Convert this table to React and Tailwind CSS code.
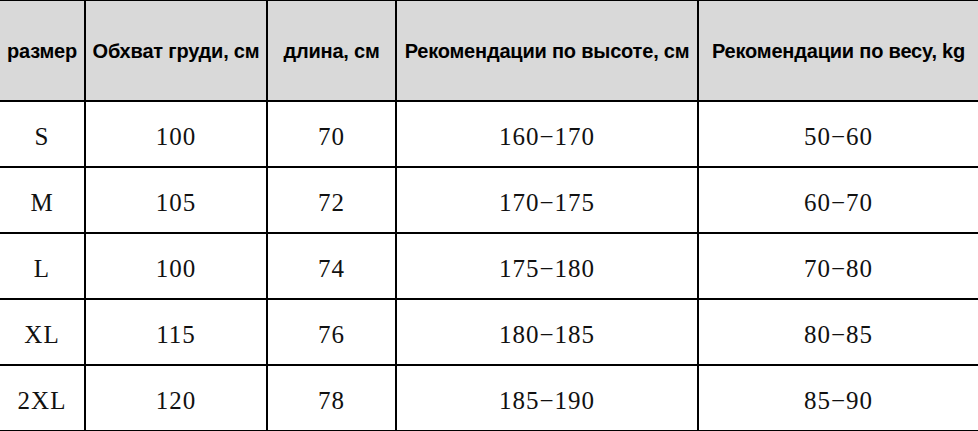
import React from "react";

const headers = [
  "размер",
  "Обхват груди, см",
  "длина, см",
  "Рекомендации по высоте, см",
  "Рекомендации по весу, kg",
];

const rows = [
  ["S", "100", "70", "160−170", "50−60"],
  ["M", "105", "72", "170−175", "60−70"],
  ["L", "100", "74", "175−180", "70−80"],
  ["XL", "115", "76", "180−185", "80−85"],
  ["2XL", "120", "78", "185−190", "85−90"],
];

const cols = "grid grid-cols-[86px_182px_129px_302px_279px]";

const App = () => {
  return (
    <div className="w-[978px] h-[431px] overflow-hidden bg-white border-t border-black">
      <div className={`${cols} h-[101px] bg-[#d9d9d9] border-b-2 border-black`}>
        {headers.map((h, i) => (
          <div
            key={h}
            className={`flex items-center justify-center font-bold text-[20px] tracking-[-0.2px] text-black whitespace-nowrap font-['Liberation_Sans',Arial,sans-serif] ${
              i < headers.length - 1 ? "border-r-2 border-black" : ""
            }`}
          >
            {h}
          </div>
        ))}
      </div>
      {rows.map((row) => (
        <div key={row[0]} className={`${cols} h-[66px] border-b-2 border-black`}>
          {row.map((cell, i) => (
            <div
              key={i}
              className={`flex items-center justify-center pt-[5px] text-[25px] tracking-[1px] text-[#111] font-['Liberation_Serif','Times_New_Roman',serif] ${
                i < row.length - 1 ? "border-r-2 border-black" : ""
              }`}
            >
              {cell}
            </div>
          ))}
        </div>
      ))}
    </div>
  );
};

export default App;
